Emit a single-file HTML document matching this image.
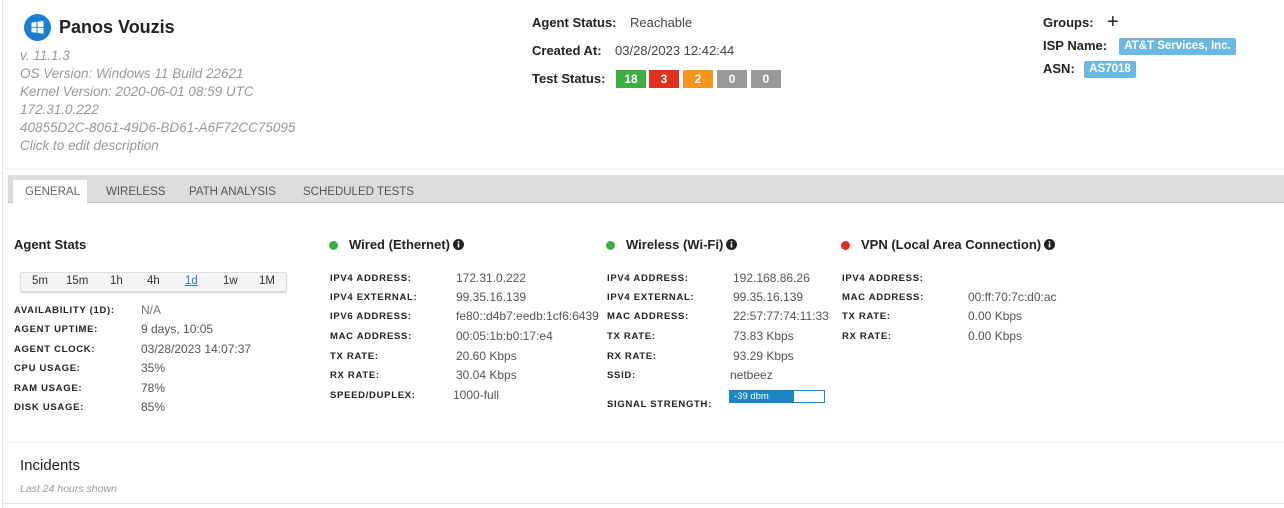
<!DOCTYPE html>
<html><head><meta charset="utf-8"><style>
*{margin:0;padding:0;box-sizing:border-box}
body{width:1284px;height:508px;background:#fff;font-family:"Liberation Sans",Arial,sans-serif;color:#333;position:relative;overflow:hidden}
.a{position:absolute;white-space:nowrap}
.g{color:#999;font-style:italic;font-size:13.5px;left:20px}
.h{font-weight:bold;font-size:13px;color:#222}
.v{font-size:13px;color:#444}
.b{position:absolute;top:70px;height:18px;width:30px;color:#fff;font-weight:bold;font-size:12px;text-align:center;line-height:18px}
.l{font-weight:bold;font-size:9.5px;letter-spacing:0.7px;color:#222}
.x{font-size:12px;color:#555}
.t{font-size:11.5px;color:#555;top:186px}
.dot{position:absolute;width:9px;height:9px;border-radius:50%}
.sec{font-weight:bold;font-size:13px;color:#222;top:237px}
.i{display:inline-block;vertical-align:-1px;margin-left:3px}
</style></head><body>
<div class="a" style="left:2px;top:0;width:1px;height:508px;background:#e3e3e3"></div>
<svg class="a" style="left:24px;top:14px" width="27" height="27" viewBox="0 0 27 27"><circle cx="13.5" cy="13.5" r="13.5" fill="#1a7fd4"/><path d="M7.5 8.6l5-.7v5h-5zM13.5 7.8l6-.9v6h-6zM7.5 13.8h5v5l-5-.7zM13.5 13.8h6v6l-6-.9z" fill="#fff"/></svg>
<div class="a" style="left:59px;top:17px;font-size:18px;font-weight:bold;color:#222">Panos Vouzis</div>
<div class="a g" style="top:48px">v. 11.1.3</div>
<div class="a g" style="top:66px">OS Version: Windows 11 Build 22621</div>
<div class="a g" style="top:84px">Kernel Version: 2020-06-01 08:59 UTC</div>
<div class="a g" style="top:102px">172.31.0.222</div>
<div class="a g" style="top:120px">40855D2C-8061-49D6-BD61-A6F72CC75095</div>
<div class="a g" style="top:138px">Click to edit description</div>

<div class="a h" style="left:532px;top:15px">Agent Status:</div><div class="a v" style="left:630px;top:15px">Reachable</div>
<div class="a h" style="left:532px;top:43px">Created At:</div><div class="a v" style="left:615px;top:43px">03/28/2023 12:42:44</div>
<div class="a h" style="left:532px;top:71px">Test Status:</div>
<div class="b" style="left:616px;background:#3cb043">18</div>
<div class="b" style="left:649px;background:#e0301e">3</div>
<div class="b" style="left:683px;background:#f7941d">2</div>
<div class="b" style="left:717px;background:#999">0</div>
<div class="b" style="left:751px;background:#999">0</div>

<div class="a h" style="left:1043px;top:15px">Groups:</div><div class="a" style="left:1107px;top:11px;font-size:20px;color:#222">+</div>
<div class="a h" style="left:1043px;top:38px">ISP Name:</div>
<div class="a" style="left:1119px;top:38px;width:117px;height:17px;background:#6bb9e3;color:#fff;font-weight:bold;font-size:11.5px;text-align:center;line-height:17px;border-radius:2px">AT&amp;T Services, Inc.</div>
<div class="a h" style="left:1043px;top:61px">ASN:</div>
<div class="a" style="left:1084px;top:61px;width:52px;height:17px;background:#6bb9e3;color:#fff;font-weight:bold;font-size:11.5px;text-align:center;line-height:17px;border-radius:2px">AS7018</div>

<div class="a" style="left:3px;top:168px;width:1281px;height:1px;background:#f0f0f0"></div>
<div class="a" style="left:8px;top:175px;width:1276px;height:28px;background:#dcdcdc;border-bottom:1px solid #c8c8c8"></div>
<div class="a" style="left:13px;top:180px;width:74px;height:24px;background:#fff"></div>
<div class="a t" style="left:25px;color:#666">GENERAL</div>
<div class="a t" style="left:106px">WIRELESS</div>
<div class="a t" style="left:189px">PATH ANALYSIS</div>
<div class="a t" style="left:303px">SCHEDULED TESTS</div>

<div class="a sec" style="left:14px">Agent Stats</div>
<div class="a" style="left:20px;top:272px;width:267px;height:20px;background:#f5f5f5;border:1px solid #ddd;border-radius:2px;box-shadow:0 1px 1px #ccc"></div>
<div class="a" style="top:275px;left:0;font-size:11.5px;color:#333">
<span class="a" style="left:32px">5m</span><span class="a" style="left:66px">15m</span><span class="a" style="left:110px">1h</span><span class="a" style="left:147px">4h</span><span class="a" style="left:185px;color:#2a7fd0;text-decoration:underline">1d</span><span class="a" style="left:223px">1w</span><span class="a" style="left:259px">1M</span></div>

<div class="a l" style="left:14px;top:305px">AVAILABILITY (1D):</div><div class="a x" style="left:141px;top:303px;color:#777">N/A</div>
<div class="a l" style="left:14px;top:324px">AGENT UPTIME:</div><div class="a x" style="left:141px;top:322px">9 days, 10:05</div>
<div class="a l" style="left:14px;top:344px">AGENT CLOCK:</div><div class="a x" style="left:141px;top:342px">03/28/2023 14:07:37</div>
<div class="a l" style="left:14px;top:363px">CPU USAGE:</div><div class="a x" style="left:141px;top:361px">35%</div>
<div class="a l" style="left:14px;top:383px">RAM USAGE:</div><div class="a x" style="left:141px;top:381px">78%</div>
<div class="a l" style="left:14px;top:402px">DISK USAGE:</div><div class="a x" style="left:141px;top:400px">85%</div>

<div class="dot" style="left:329px;top:241px;background:#3cb043"></div>
<div class="a sec" style="left:349px">Wired (Ethernet)<svg class="i" width="11" height="11" viewBox="0 0 11 11"><circle cx="5.5" cy="5.5" r="5.5" fill="#222"/><rect x="4.7" y="4.5" width="1.6" height="4" fill="#fff"/><circle cx="5.5" cy="2.9" r="0.9" fill="#fff"/></svg></div>
<div class="a l" style="left:330px;top:273px">IPV4 ADDRESS:</div><div class="a x" style="left:456px;top:271px">172.31.0.222</div>
<div class="a l" style="left:330px;top:292px">IPV4 EXTERNAL:</div><div class="a x" style="left:456px;top:290px">99.35.16.139</div>
<div class="a l" style="left:330px;top:311px">IPV6 ADDRESS:</div><div class="a x" style="left:456px;top:309px">fe80::d4b7:eedb:1cf6:6439</div>
<div class="a l" style="left:330px;top:331px">MAC ADDRESS:</div><div class="a x" style="left:456px;top:329px">00:05:1b:b0:17:e4</div>
<div class="a l" style="left:330px;top:351px">TX RATE:</div><div class="a x" style="left:456px;top:349px">20.60 Kbps</div>
<div class="a l" style="left:330px;top:370px">RX RATE:</div><div class="a x" style="left:456px;top:368px">30.04 Kbps</div>
<div class="a l" style="left:330px;top:390px">SPEED/DUPLEX:</div><div class="a x" style="left:453px;top:388px">1000-full</div>

<div class="dot" style="left:606px;top:241px;background:#3cb043"></div>
<div class="a sec" style="left:626px">Wireless (Wi-Fi)<svg class="i" width="11" height="11" viewBox="0 0 11 11"><circle cx="5.5" cy="5.5" r="5.5" fill="#222"/><rect x="4.7" y="4.5" width="1.6" height="4" fill="#fff"/><circle cx="5.5" cy="2.9" r="0.9" fill="#fff"/></svg></div>
<div class="a l" style="left:607px;top:273px">IPV4 ADDRESS:</div><div class="a x" style="left:733px;top:271px">192.168.86.26</div>
<div class="a l" style="left:607px;top:292px">IPV4 EXTERNAL:</div><div class="a x" style="left:733px;top:290px">99.35.16.139</div>
<div class="a l" style="left:607px;top:311px">MAC ADDRESS:</div><div class="a x" style="left:733px;top:309px">22:57:77:74:11:33</div>
<div class="a l" style="left:607px;top:331px">TX RATE:</div><div class="a x" style="left:733px;top:329px">73.83 Kbps</div>
<div class="a l" style="left:607px;top:351px">RX RATE:</div><div class="a x" style="left:733px;top:349px">93.29 Kbps</div>
<div class="a l" style="left:607px;top:370px">SSID:</div><div class="a x" style="left:730px;top:368px">netbeez</div>
<div class="a l" style="left:607px;top:399px">SIGNAL STRENGTH:</div>
<div class="a" style="left:729px;top:390px;width:96px;height:13px;border:1px solid #1a86c8;background:#fff"><div style="width:64px;height:11px;background:#1a86c8;color:#fff;font-size:9.5px;line-height:11px;padding-left:4px">-39 dbm</div></div>

<div class="dot" style="left:841px;top:241px;background:#e0301e"></div>
<div class="a sec" style="left:861px">VPN (Local Area Connection)<svg class="i" width="11" height="11" viewBox="0 0 11 11"><circle cx="5.5" cy="5.5" r="5.5" fill="#222"/><rect x="4.7" y="4.5" width="1.6" height="4" fill="#fff"/><circle cx="5.5" cy="2.9" r="0.9" fill="#fff"/></svg></div>
<div class="a l" style="left:842px;top:273px">IPV4 ADDRESS:</div>
<div class="a l" style="left:842px;top:292px">MAC ADDRESS:</div><div class="a x" style="left:968px;top:290px">00:ff:70:7c:d0:ac</div>
<div class="a l" style="left:842px;top:311px">TX RATE:</div><div class="a x" style="left:968px;top:309px">0.00 Kbps</div>
<div class="a l" style="left:842px;top:331px">RX RATE:</div><div class="a x" style="left:968px;top:329px">0.00 Kbps</div>

<div class="a" style="left:3px;top:442px;width:1281px;height:1px;background:#f0f0f0"></div>
<div class="a" style="left:20px;top:457px;font-size:15px;color:#222">Incidents</div>
<div class="a" style="left:20px;top:483px;font-size:10.5px;font-style:italic;color:#999">Last 24 hours shown</div>
<div class="a" style="left:3px;top:503px;width:1281px;height:1px;background:#e6e6e6"></div>
</body></html>
